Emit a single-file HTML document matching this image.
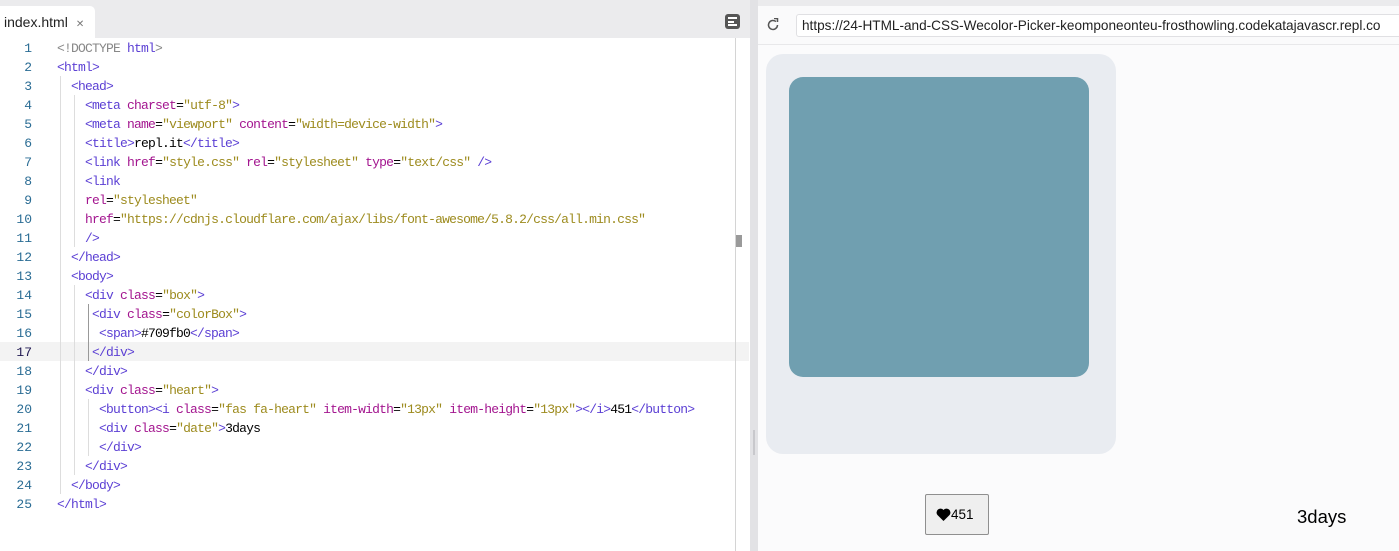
<!DOCTYPE html>
<html><head><style>
*{margin:0;padding:0;box-sizing:border-box}
body{width:1399px;height:551px;overflow:hidden;background:#ebebed;position:relative;font-family:"Liberation Sans",sans-serif}
.tab{position:absolute;left:0;top:6px;width:95px;height:33px;background:#fff;border-radius:0 5px 0 0;font-size:14px;color:#222;padding:8px 0 0 4px}
.tab span{font-size:10px;color:#777;margin-left:8px}
.icon{position:absolute;left:725px;top:14px;width:15px;height:15px;background:#555;border-radius:3px}
.icon i{position:absolute;left:3px;height:2px;background:#fff}
.editor{position:absolute;left:0;top:38px;width:750px;height:513px;background:#fff}
.vline{position:absolute;left:735px;top:38px;width:1px;height:513px;background:#d4d4d4}
.thumb{position:absolute;left:736px;top:235px;width:6px;height:12px;background:#9a9a9a}
.hl{position:absolute;left:0;top:342px;width:749px;height:19px;background:#f3f3f3}
.code{position:absolute;left:0;top:39px;font-family:"Liberation Mono",monospace;font-size:13px;letter-spacing:-0.8px;line-height:19px;white-space:pre}
.ln{position:absolute;left:0;width:32px;text-align:right;color:#2a6c94;letter-spacing:0}
.l{position:absolute;left:57px;color:#000}
.t{color:#5b3fd4}.a{color:#a3158f}.s{color:#9d8b1e}.d{color:#888}
.g{position:absolute;width:1px;background:#ddd}
.div{position:absolute;left:750px;top:0;width:8px;height:551px;background:#e2e2e5}
.div i{position:absolute;left:3px;top:430px;width:2px;height:25px;background:#c8c8cc}
.bar{position:absolute;left:758px;top:6px;width:641px;height:39px;background:#fafafb;border-bottom:1px solid #e8e8ea}
.url{position:absolute;left:796px;top:14px;width:610px;height:23px;background:#fff;border:1px solid #e0e0e3;border-radius:3px;font-size:13.6px;color:#222;padding:3px 0 0 5px;white-space:nowrap;overflow:hidden}
.prev{position:absolute;left:758px;top:45px;width:641px;height:506px;background:#fbfbfc}
.box{position:absolute;left:766px;top:54px;width:350px;height:400px;background:#e9ecf1;border-radius:17px}
.cb{position:absolute;left:789px;top:77px;width:300px;height:300px;background:#709fb0;border-radius:14px}
.btn{position:absolute;left:925px;top:494px;width:64px;height:41px;background:#efefef;border:1px solid #8f8f8f;border-radius:2px;font-size:13.5px;color:#000;padding:12px 0 0 10px}
.btn svg{vertical-align:-2px}
.date{position:absolute;left:1297px;top:506px;font-size:18.5px;color:#000}
</style></head><body>
<div class="tab">index.html<span>✕</span></div>
<div class="icon"><i style="top:3px;width:9px"></i><i style="top:6.5px;width:6px"></i><i style="top:10px;width:9px"></i></div>
<div class="editor"></div>
<div class="hl"></div>
<div class="vline"></div><div class="thumb"></div>
<div class="g" style="left:60px;top:76px;height:418px"></div>
<div class="g" style="left:74px;top:95px;height:152px"></div>
<div class="g" style="left:74px;top:285px;height:190px"></div>
<div class="g" style="left:88px;top:304px;height:57px;background:#999"></div>
<div class="g" style="left:88px;top:399px;height:57px"></div>
<div class="code">
<div class="ln" style="top:0">1</div><div class="l" style="top:0"><span class="d">&lt;!DOCTYPE </span><span class="t">html</span><span class="d">&gt;</span></div>
<div class="ln" style="top:19px">2</div><div class="l" style="top:19px"><span class="t">&lt;html&gt;</span></div>
<div class="ln" style="top:38px">3</div><div class="l" style="top:38px">  <span class="t">&lt;head&gt;</span></div>
<div class="ln" style="top:57px">4</div><div class="l" style="top:57px">    <span class="t">&lt;meta</span> <span class="a">charset</span>=<span class="s">"utf-8"</span><span class="t">&gt;</span></div>
<div class="ln" style="top:76px">5</div><div class="l" style="top:76px">    <span class="t">&lt;meta</span> <span class="a">name</span>=<span class="s">"viewport"</span> <span class="a">content</span>=<span class="s">"width=device-width"</span><span class="t">&gt;</span></div>
<div class="ln" style="top:95px">6</div><div class="l" style="top:95px">    <span class="t">&lt;title&gt;</span>repl.it<span class="t">&lt;/title&gt;</span></div>
<div class="ln" style="top:114px">7</div><div class="l" style="top:114px">    <span class="t">&lt;link</span> <span class="a">href</span>=<span class="s">"style.css"</span> <span class="a">rel</span>=<span class="s">"stylesheet"</span> <span class="a">type</span>=<span class="s">"text/css"</span> <span class="t">/&gt;</span></div>
<div class="ln" style="top:133px">8</div><div class="l" style="top:133px">    <span class="t">&lt;link</span></div>
<div class="ln" style="top:152px">9</div><div class="l" style="top:152px">    <span class="a">rel</span>=<span class="s">"stylesheet"</span></div>
<div class="ln" style="top:171px">10</div><div class="l" style="top:171px">    <span class="a">href</span>=<span class="s">"https://cdnjs.cloudflare.com/ajax/libs/font-awesome/5.8.2/css/all.min.css"</span></div>
<div class="ln" style="top:190px">11</div><div class="l" style="top:190px">    <span class="t">/&gt;</span></div>
<div class="ln" style="top:209px">12</div><div class="l" style="top:209px">  <span class="t">&lt;/head&gt;</span></div>
<div class="ln" style="top:228px">13</div><div class="l" style="top:228px">  <span class="t">&lt;body&gt;</span></div>
<div class="ln" style="top:247px">14</div><div class="l" style="top:247px">    <span class="t">&lt;div</span> <span class="a">class</span>=<span class="s">"box"</span><span class="t">&gt;</span></div>
<div class="ln" style="top:266px">15</div><div class="l" style="top:266px">     <span class="t">&lt;div</span> <span class="a">class</span>=<span class="s">"colorBox"</span><span class="t">&gt;</span></div>
<div class="ln" style="top:285px">16</div><div class="l" style="top:285px">      <span class="t">&lt;span&gt;</span>#709fb0<span class="t">&lt;/span&gt;</span></div>
<div class="ln" style="top:304px;color:#1d1650">17</div><div class="l" style="top:304px">     <span class="t">&lt;/div&gt;</span></div>
<div class="ln" style="top:323px">18</div><div class="l" style="top:323px">    <span class="t">&lt;/div&gt;</span></div>
<div class="ln" style="top:342px">19</div><div class="l" style="top:342px">    <span class="t">&lt;div</span> <span class="a">class</span>=<span class="s">"heart"</span><span class="t">&gt;</span></div>
<div class="ln" style="top:361px">20</div><div class="l" style="top:361px">      <span class="t">&lt;button&gt;&lt;i</span> <span class="a">class</span>=<span class="s">"fas fa-heart"</span> <span class="a">item-width</span>=<span class="s">"13px"</span> <span class="a">item-height</span>=<span class="s">"13px"</span><span class="t">&gt;&lt;/i&gt;</span>451<span class="t">&lt;/button&gt;</span></div>
<div class="ln" style="top:380px">21</div><div class="l" style="top:380px">      <span class="t">&lt;div</span> <span class="a">class</span>=<span class="s">"date"</span><span class="t">&gt;</span>3days</div>
<div class="ln" style="top:399px">22</div><div class="l" style="top:399px">      <span class="t">&lt;/div&gt;</span></div>
<div class="ln" style="top:418px">23</div><div class="l" style="top:418px">    <span class="t">&lt;/div&gt;</span></div>
<div class="ln" style="top:437px">24</div><div class="l" style="top:437px">  <span class="t">&lt;/body&gt;</span></div>
<div class="ln" style="top:456px">25</div><div class="l" style="top:456px"><span class="t">&lt;/html&gt;</span></div>
</div>
<div class="div"><i></i></div>
<div class="bar"></div>
<svg style="position:absolute;left:766px;top:18px" width="14" height="14" viewBox="0 0 14 14"><path d="M11.5 7A4.5 4.5 0 1 1 10 3.6" fill="none" stroke="#555" stroke-width="1.5"/><path d="M8 0.5h3.5V4" fill="none" stroke="#555" stroke-width="1.5"/></svg>
<div class="url">https://24-HTML-and-CSS-Wecolor-Picker-keomponeonteu-frosthowling.codekatajavascr.repl.co</div>
<div class="prev"></div>
<div class="box"></div>
<div class="cb"></div>
<div class="btn"><svg width="15" height="13" viewBox="0 0 16 14"><path d="M8 14L1.5 7.6A4 4 0 0 1 8 2.2 4 4 0 0 1 14.5 7.6Z" fill="#000"/></svg>451</div>
<div class="date">3days</div>
</body></html>
